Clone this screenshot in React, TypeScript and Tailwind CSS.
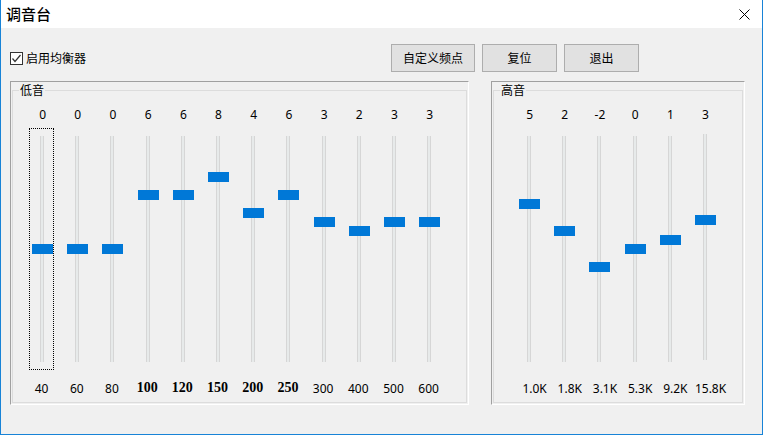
import React from "react";

const sans = { fontFamily: '"Noto Sans", "Noto Sans CJK SC", sans-serif' };

type S = { v: number; label: string; bold?: boolean; shift?: number };

const low: S[] = [
  { v: 0, label: "40" },
  { v: 0, label: "60" },
  { v: 0, label: "80" },
  { v: 6, label: "100", bold: true },
  { v: 6, label: "120", bold: true },
  { v: 8, label: "150", bold: true },
  { v: 4, label: "200", bold: true },
  { v: 6, label: "250", bold: true },
  { v: 3, label: "300" },
  { v: 2, label: "400" },
  { v: 3, label: "500" },
  { v: 3, label: "600" },
];

const high: S[] = [
  { v: 5, label: "1.0K" },
  { v: 2, label: "1.8K" },
  { v: -2, label: "3.1K" },
  { v: 0, label: "5.3K" },
  { v: 1, label: "9.2K" },
  { v: 3, label: "15.8K", shift: -2 },
];

function Slider({ s, focus }: { s: S; focus?: boolean }) {
  const sh = s.shift ?? 0;
  return (
    <div className="relative w-[35.2px] h-[242px] shrink-0">
      {focus && (
        <div className="absolute left-[4px] top-0 w-[25px] h-[242px] border border-dotted border-black" />
      )}
      <div
        className="absolute left-[15px] w-[4px] h-[226px] bg-[#e7eaea] border-x border-[#d6d6d6]"
        style={{ top: 8 + sh }}
      />
      <div
        className="absolute left-[7px] w-[21px] h-[10px] bg-[#0078d7]"
        style={{ top: 116 - 9 * s.v + sh }}
      />
    </div>
  );
}

function Group({
  title,
  items,
  width,
  pl,
  labelPl,
}: {
  title: string;
  items: S[];
  width: string;
  pl: string;
  labelPl: string;
}) {
  return (
    <div
      className={`${width} h-[324px] shrink-0 flex border-t border-l border-t-[#a0a0a0] border-l-[#a0a0a0] border-r border-b border-r-white border-b-white`}
    >
      <div className="flex-1 mt-[8px] ml-[1px] mr-[1px] mb-[1px] border border-[#dcdcdc] relative flex flex-col">
        <div
          className="absolute -top-[9px] left-[6px] bg-[#f0f0f0] px-[1px] text-[12px] leading-[16px] text-black"
          style={{ fontFamily: '"Noto Sans CJK SC", sans-serif' }}
        >
          {title}
        </div>
        <div className={`flex ${pl} pt-[16px]`}>
          {items.map((s, i) => (
            <div
              key={i}
              className="w-[35.2px] shrink-0 text-center text-[12px] leading-[16px] text-black"
              style={sans}
            >
              {s.v}
            </div>
          ))}
        </div>
        <div className={`flex ${pl} mt-[5px]`}>
          {items.map((s, i) => (
            <Slider key={i} s={s} focus={title === "低音" && i === 0} />
          ))}
        </div>
        <div className={`flex ${labelPl} mt-[11px]`}>
          {items.map((s, i) =>
            s.bold ? (
              <div
                key={i}
                className="w-[35.2px] shrink-0 text-center text-[14px] font-bold leading-[14px] h-[16px] text-black"
                style={{ fontFamily: '"Liberation Serif", serif' }}
              >
                {s.label}
              </div>
            ) : (
              <div
                key={i}
                className="w-[35.2px] shrink-0 text-center text-[12px] leading-[16px] text-black"
                style={sans}
              >
                {s.label}
              </div>
            )
          )}
        </div>
      </div>
    </div>
  );
}

function Button({ children, w }: { children: React.ReactNode; w: string }) {
  return (
    <div
      className={`${w} h-[28px] flex items-center justify-center bg-[#e1e1e1] border border-[#adadad] text-[12px] text-black`}
      style={{ fontFamily: '"Noto Sans CJK SC", sans-serif' }}
    >
      {children}
    </div>
  );
}

export default function App() {
  return (
    <div className="w-[763px] h-[435px] flex flex-col border-x border-b border-[#1883d7] bg-[#f0f0f0] overflow-hidden">
      <div className="h-[28px] shrink-0 bg-white flex items-center justify-between pl-[5px] pr-[12px]">
        <div
          className="text-[15px] leading-[20px] text-black font-medium"
          style={{ fontFamily: '"Noto Sans CJK SC", sans-serif' }}
        >
          调音台
        </div>
        <svg width="11" height="11" viewBox="0 0 11 11">
          <path d="M0.5 0.5 L10.5 10.5 M10.5 0.5 L0.5 10.5" stroke="#000" strokeWidth="1" />
        </svg>
      </div>
      <div className="flex flex-col pl-[9px] pt-[16px]">
        <div className="flex items-center h-[28px]">
          <div className="w-[381px] flex items-center gap-[3px]">
            <div className="w-[13px] h-[13px] border border-[#333333] bg-white flex items-center justify-center">
              <svg width="11" height="11" viewBox="0 0 11 11">
                <path d="M1.5 5.5 L4 8.5 L9.5 2" stroke="#333" strokeWidth="1.2" fill="none" />
              </svg>
            </div>
            <span
              className="text-[12px] leading-[16px] text-black"
              style={{ fontFamily: '"Noto Sans CJK SC", sans-serif' }}
            >
              启用均衡器
            </span>
          </div>
          <div className="flex gap-[7px]">
            <Button w="w-[84px]">自定义频点</Button>
            <Button w="w-[75px]">复位</Button>
            <Button w="w-[75px]">退出</Button>
          </div>
        </div>
        <div className="flex gap-[22px] mt-[9px]">
          <Group title="低音" items={low} width="w-[459px]" pl="pl-[12px]" labelPl="pl-[11px]" />
          <Group title="高音" items={high} width="w-[254px]" pl="pl-[18px]" labelPl="pl-[23px]" />
        </div>
      </div>
    </div>
  );
}
